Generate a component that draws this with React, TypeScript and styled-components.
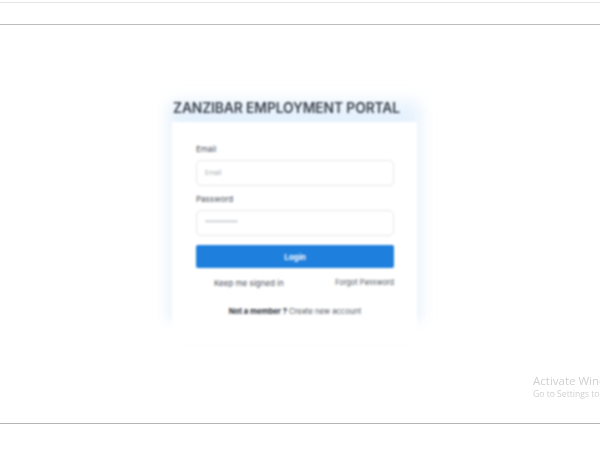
import styled, { createGlobalStyle } from 'styled-components';

const GlobalStyle = createGlobalStyle`
    html, body {
        margin: 0;
        padding: 0;
        background: #fff;
        overflow: hidden;
    }
    * {
        box-sizing: border-box;
    }
`;

function App() {
    return (
        <>
            <GlobalStyle />
            <Page>
                <TopBar />
                <Stage>
                    <Portal>
                        <Title>ZANZIBAR EMPLOYMENT PORTAL</Title>
                        <Card>
                            <Label>Email</Label>
                            <Field>
                                <Hint>Email</Hint>
                            </Field>
                            <Label>Password</Label>
                            <Field>
                                <Hint>**********</Hint>
                            </Field>
                            <LoginButton>Login</LoginButton>
                            <OptionsRow>
                                <KeepSigned>Keep me signed in</KeepSigned>
                                <Forgot>Forgot Password</Forgot>
                            </OptionsRow>
                            <Member>
                                <strong>Not a member ?</strong> Create new account
                            </Member>
                        </Card>
                    </Portal>
                    <Watermark>
                        <h4>Activate Windows</h4>
                        <p>Go to Settings to activate Windows.</p>
                    </Watermark>
                </Stage>
            </Page>
        </>
    );
}

export default App;

const Page = styled.div`
    width: 600px;
    height: 460px;
    padding-top: 2px;
    overflow: hidden;
    font-family: 'Inter', 'Liberation Sans', sans-serif;
`;
const TopBar = styled.div`
    height: 23px;
    border-top: 1px solid #e4e4e4;
    border-bottom: 1px solid #bdbdbd;
`;
const Stage = styled.main`
    position: relative;
    height: 399px;
    padding: 71px 0 0 172px;
    border-bottom: 1px solid #b5b5b5;
    overflow: hidden;
`;
const Portal = styled.section`
    position: relative;
    width: 245px;
    filter: blur(0.8px);
    /* soft blue glow behind the card */
    &::before {
        content: '';
        position: absolute;
        inset: 6px -3px 6px -3px;
        background: #e5f1fc;
        filter: blur(8px);
    }
`;
const Title = styled.h1`
    position: relative;
    height: 26px;
    margin: 0;
    padding-left: 1px;
    font-size: 13.8px;
    line-height: 24px;
    font-weight: 600;
    letter-spacing: -0.1px;
    white-space: nowrap;
    color: #3a404b;
`;
const Card = styled.div`
    position: relative;
    display: flex;
    flex-direction: column;
    height: 212px;
    padding: 21px 23px 0 24px;
    background: #fff;
    /* bottom of the card and glow fade out to the page */
    &::after {
        content: '';
        position: absolute;
        left: -24px;
        right: -24px;
        bottom: -8px;
        height: 30px;
        background: linear-gradient(to bottom, rgba(255, 255, 255, 0), #fff 75%);
    }
`;
const Label = styled.label`
    height: 12px;
    font-size: 8px;
    line-height: 12px;
    color: #4c525c;
`;
const Field = styled.div`
    display: flex;
    align-items: center;
    height: 26px;
    margin: 5px 0 7px;
    padding: 0 8px;
    border: 1px solid #e6e8ec;
    border-radius: 5px;
`;
const Hint = styled.span`
    font-size: 6.5px;
    color: #a9adb4;
`;
const LoginButton = styled.button`
    height: 23px;
    margin-top: 2px;
    border: 0;
    border-radius: 2px;
    padding: 0;
    background: #1f7fdc;
    color: #f2f8fe;
    font-family: inherit;
    font-size: 8px;
    font-weight: 700;
`;
const OptionsRow = styled.div`
    display: flex;
    justify-content: space-between;
    align-items: center;
    height: 14px;
    margin-top: 8px;
    padding-left: 18px;
    color: #4c525c;
`;
const KeepSigned = styled.span`
    font-size: 8px;
`;
const Forgot = styled.a`
    margin-top: -2px;
    font-size: 7.4px;
`;
const Member = styled.p`
    margin: 16px 0 0;
    font-size: 7.6px;
    line-height: 12px;
    text-align: center;
    color: #4c525c;
    strong {
        color: #2b3038;
        font-weight: 700;
    }
`;
/* windows watermark sits over the page */
const Watermark = styled.div`
    position: absolute;
    top: 348px;
    left: 533px;
    width: 200px;
    font-family: 'Open Sans', 'Liberation Sans', sans-serif;
    color: #d0d0d0;
    filter: blur(0.4px);
    h4 {
        margin: 0;
        font-size: 11.5px;
        line-height: 15px;
        font-weight: 400;
    }
    p {
        margin: 0;
        font-size: 8.6px;
        line-height: 12px;
    }
`;
